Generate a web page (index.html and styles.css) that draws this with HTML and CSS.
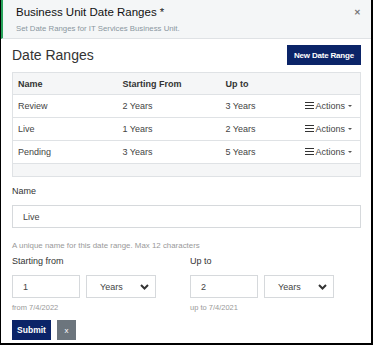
FILE: index.html
```html
<!DOCTYPE html>
<html>
<head>
<meta charset="utf-8">
<link rel="stylesheet" href="styles.css">
</head>
<body>
<div class="modal">
  <div class="modal-header">
    <div class="titles">
      <div class="title">Business Unit Date Ranges <span class="req">*</span></div>
      <div class="subtitle">Set Date Ranges for IT Services Business Unit.</div>
    </div>
    <div class="close">&#x2715;</div>
  </div>
  <div class="modal-body">
    <div class="top-row">
      <h2 class="heading">Date Ranges</h2>
      <button class="btn btn-primary btn-new">New Date Range</button>
    </div>
    <table class="ranges">
      <thead>
        <tr><th class="c-name">Name</th><th class="c-from">Starting From</th><th class="c-to">Up to</th><th class="c-act"></th></tr>
      </thead>
      <tbody>
        <tr><td>Review</td><td>2 Years</td><td>3 Years</td><td class="c-act"><span class="actions"><svg class="burger" width="9" height="7" viewBox="0 0 9 7"><path d="M0 0.5H9M0 3.5H9M0 6.5H9" stroke="#333" stroke-width="1"/></svg>Actions<span class="caret"></span></span></td></tr>
        <tr><td>Live</td><td>1 Years</td><td>2 Years</td><td class="c-act"><span class="actions"><svg class="burger" width="9" height="7" viewBox="0 0 9 7"><path d="M0 0.5H9M0 3.5H9M0 6.5H9" stroke="#333" stroke-width="1"/></svg>Actions<span class="caret"></span></span></td></tr>
        <tr><td>Pending</td><td>3 Years</td><td>5 Years</td><td class="c-act"><span class="actions"><svg class="burger" width="9" height="7" viewBox="0 0 9 7"><path d="M0 0.5H9M0 3.5H9M0 6.5H9" stroke="#333" stroke-width="1"/></svg>Actions<span class="caret"></span></span></td></tr>
        <tr class="empty"><td colspan="4"></td></tr>
      </tbody>
    </table>

    <div class="field">
      <label class="lbl">Name</label>
      <div class="input wide">Live</div>
      <div class="help help-name">A unique name for this date range. Max 12 characters</div>
    </div>

    <div class="two-col">
      <div class="col">
        <label class="lbl">Starting from</label>
        <div class="pair">
          <div class="input num">1</div>
          <div class="input sel">Years<svg class="chev" width="9" height="6" viewBox="0 0 9 6"><path d="M1 1L4.5 4.5L8 1" fill="none" stroke="#333" stroke-width="2"/></svg></div>
        </div>
        <div class="help">from 7/4/2022</div>
      </div>
      <div class="col">
        <label class="lbl">Up to</label>
        <div class="pair">
          <div class="input num">2</div>
          <div class="input sel">Years<svg class="chev" width="9" height="6" viewBox="0 0 9 6"><path d="M1 1L4.5 4.5L8 1" fill="none" stroke="#333" stroke-width="2"/></svg></div>
        </div>
        <div class="help">up to 7/4/2021</div>
      </div>
    </div>

    <div class="buttons">
      <button class="btn btn-primary btn-submit">Submit</button>
      <button class="btn btn-grey">x</button>
    </div>
  </div>
</div>
</body>
</html>
```
FILE: styles.css
```css
* { box-sizing: border-box; }
html, body { margin: 0; padding: 0; }
body {
  width: 373px;
  height: 345px;
  font-family: "Liberation Sans", Arial, sans-serif;
  color: #333;
  background: #fff;
}
.modal {
  width: 373px;
  height: 345px;
  border-left: 1px solid #000;
  border-right: 2px solid #000;
  border-bottom: 2px solid #000;
  overflow: hidden;
}
.modal-header {
  height: 39px;
  background: #f4f6f7;
  border-left: 2px solid #28a35a;
  border-bottom: 1px solid #dfe2e5;
  display: flex;
  justify-content: space-between;
  padding: 6px 10px 0 13px;
}
.title {
  font-size: 11.5px;
  color: #111;
  line-height: 13px;
}
.req { color: #222; }
.subtitle {
  font-size: 7.8px;
  color: #8a96a0;
  margin-top: 5px;
  line-height: 10px;
}
.close {
  font-size: 8px;
  color: #777;
  font-weight: bold;
  padding-top: 2px;
}
.modal-body {
  padding: 6px 10px 0 11px;
}
.top-row {
  display: flex;
  justify-content: space-between;
  align-items: flex-start;
  height: 27px;
}
.heading {
  margin: 0;
  font-size: 14px;
  font-weight: normal;
  color: #333;
  line-height: 18px;
  margin-top: 1px;
}
.btn {
  font-family: "Liberation Sans", Arial, sans-serif;
  border: none;
  color: #fff;
  padding: 0;
  cursor: pointer;
}
.btn-primary { background: #0b2468; }
.btn-new {
  width: 74px;
  height: 20px;
  font-size: 8px;
  font-weight: bold;
  letter-spacing: -0.2px;
}
.ranges {
  width: 349px;
  border-collapse: collapse;
  font-size: 9px;
  border: 1px solid #dfe2e5;
}
.ranges th {
  background: #f5f6f7;
  text-align: left;
  font-weight: bold;
  height: 22px;
  padding: 0 0 0 5px;
  color: #333;
}
.ranges td {
  height: 23px;
  padding: 0 0 0 5px;
  border-top: 1px solid #dfe2e5;
  color: #444;
}
.ranges tr.empty td { height: 13px; background: #f5f6f7; }
.c-name { width: 105px; }
.c-from { width: 103px; }
.c-to { width: 70px; }
.ranges td.c-act { text-align: right; padding-right: 8px; }
.actions { display: inline-flex; align-items: center; }
.burger { margin-right: 1px; }
.caret {
  display: inline-block;
  width: 0; height: 0;
  border-left: 2.5px solid transparent;
  border-right: 2.5px solid transparent;
  border-top: 2.5px solid #555;
  margin-left: 3px;
}
.field { margin-top: 9px; }
.lbl {
  display: block;
  font-size: 9px;
  color: #333;
  line-height: 10px;
  margin-bottom: 9px;
}
.input {
  border: 1px solid #d6d9dc;
  height: 23px;
  font-size: 9px;
  color: #444;
  display: flex;
  align-items: center;
  padding-left: 10px;
  background: #fff;
}
.wide { width: 349px; }
.help {
  font-size: 7.5px;
  color: #999;
  margin-top: 5px;
  line-height: 9px;
}
.help-name {
  font-size: 7.9px;
  margin-top: 13px;
}
.two-col {
  display: grid;
  grid-template-columns: 178px 171px;
  margin-top: 6px;
}
.pair { display: flex; gap: 6px; }
.num { width: 68px; }
.sel {
  width: 70px;
  justify-content: space-between;
  padding-left: 13px;
  padding-right: 6px;
}
.buttons {
  display: flex;
  gap: 6px;
  margin-top: 8px;
}
.btn-submit {
  width: 39px;
  height: 20px;
  font-size: 8.5px;
  font-weight: bold;
}
.btn-grey {
  width: 19px;
  height: 20px;
  background: #6c757d;
  font-size: 8px;
}
```
